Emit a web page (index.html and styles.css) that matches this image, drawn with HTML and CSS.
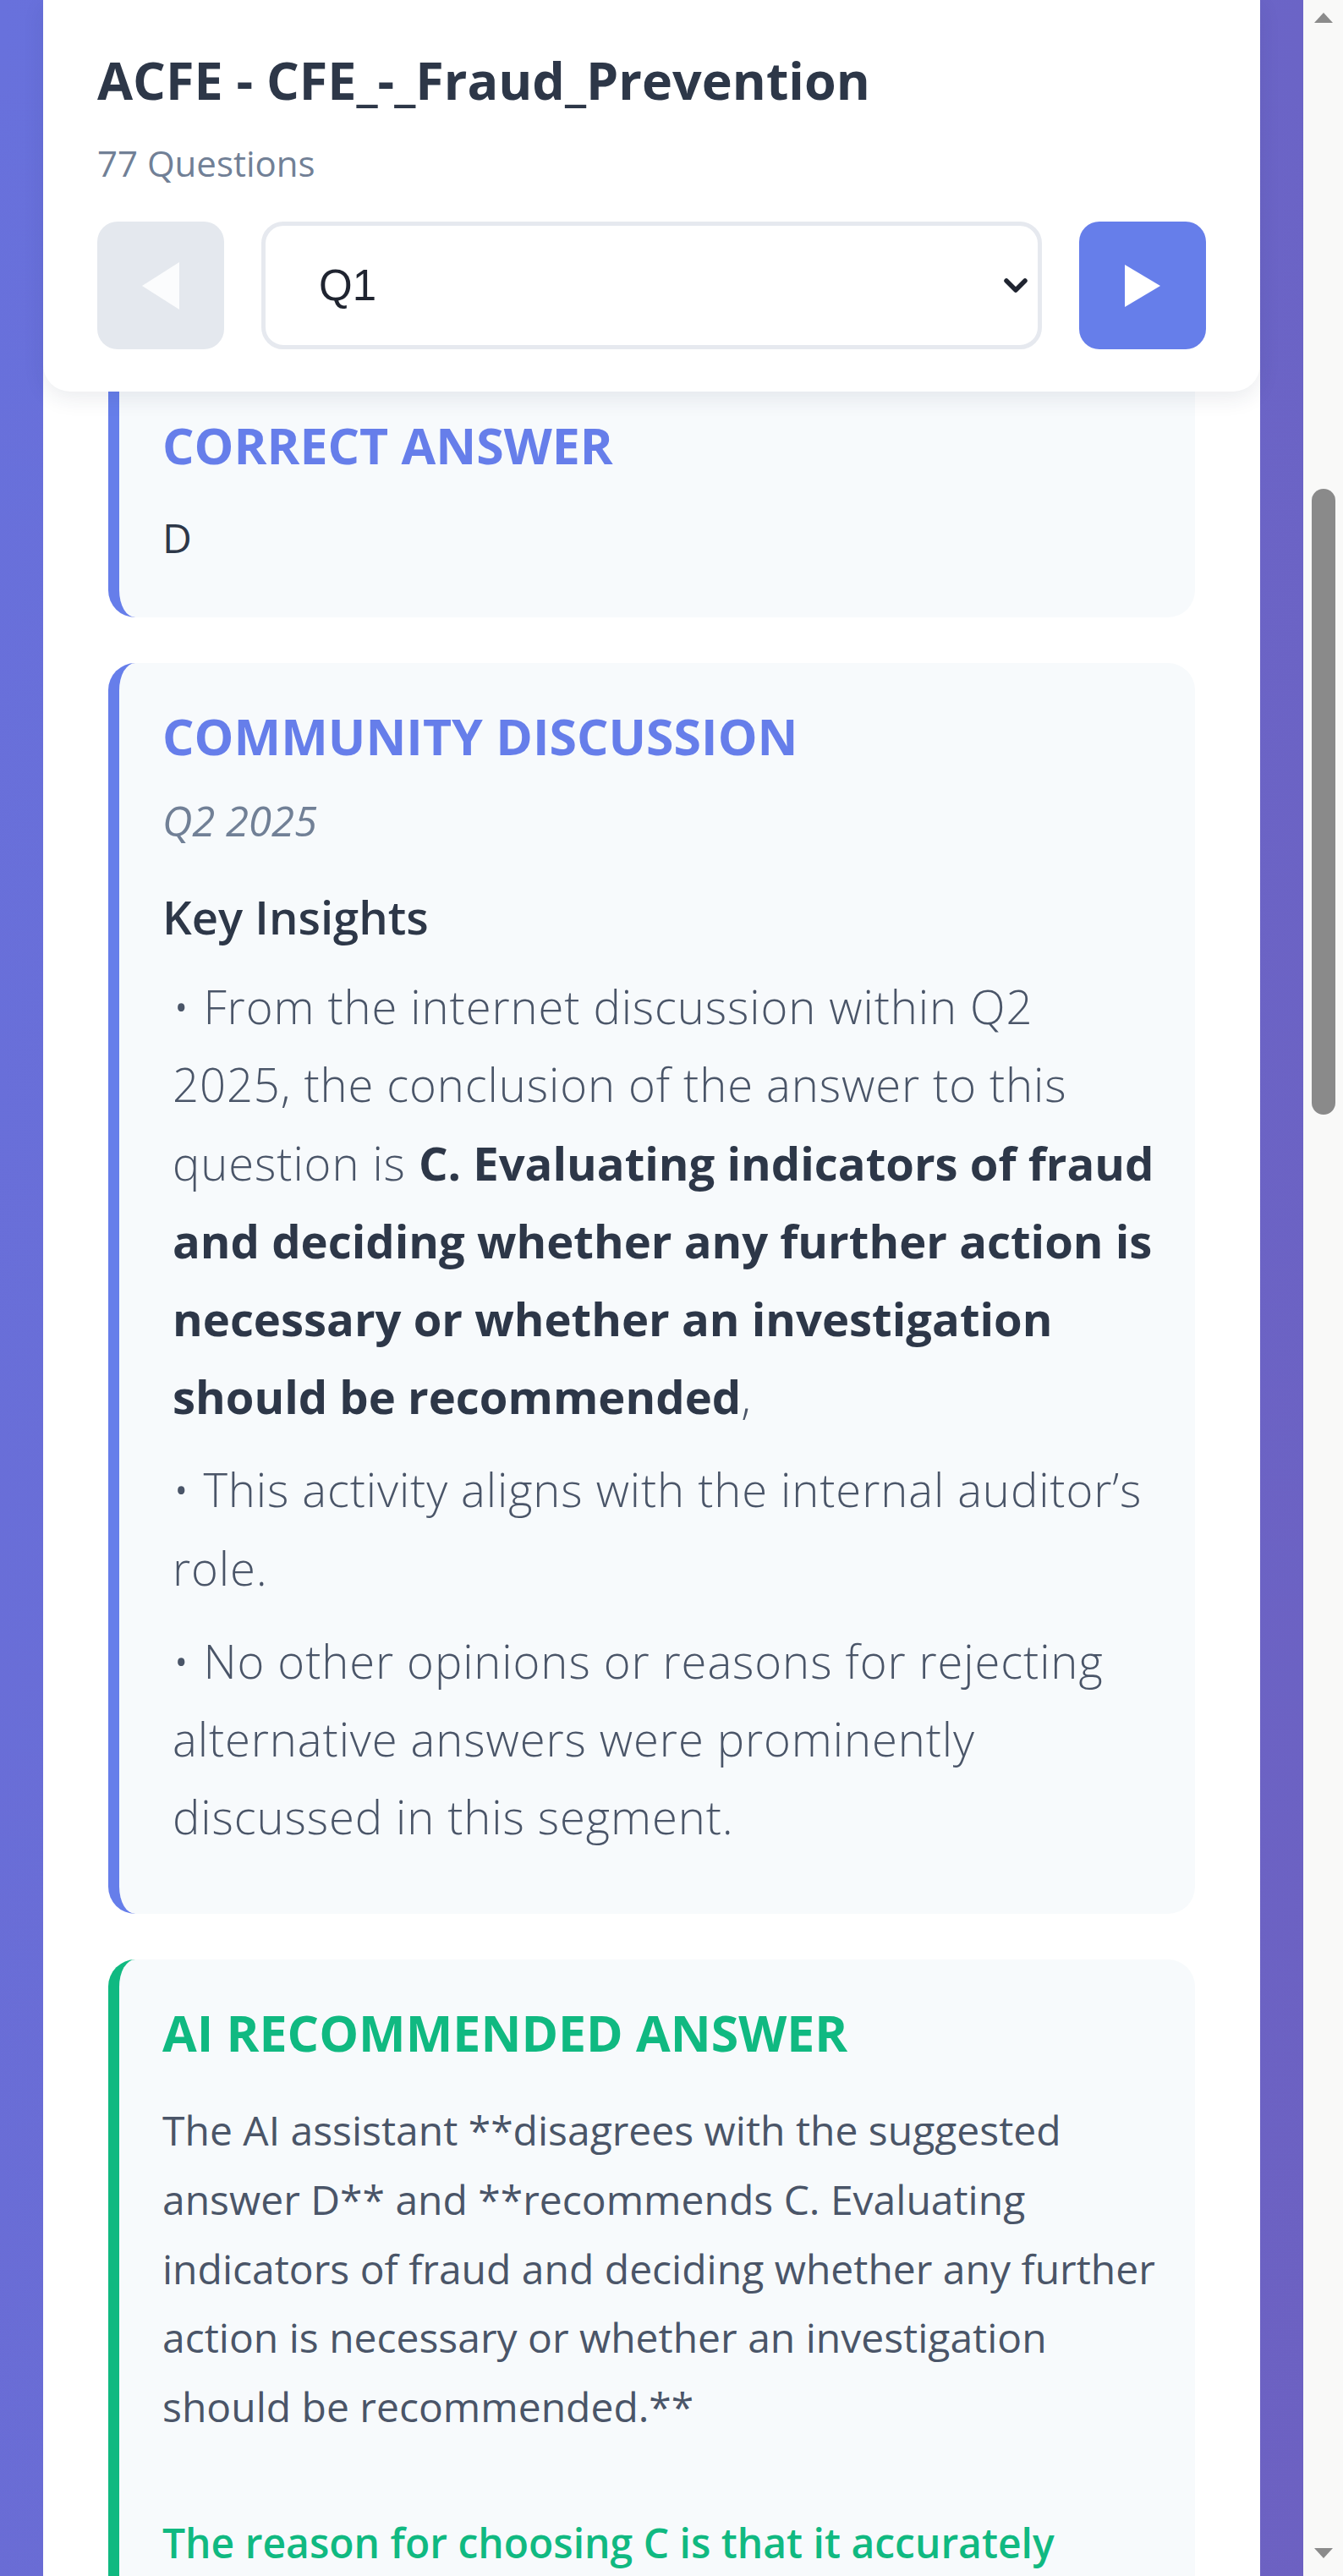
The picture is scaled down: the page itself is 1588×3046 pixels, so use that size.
FILE: index.html
```html
<!DOCTYPE html>
<html lang="en">
<head>
<meta charset="utf-8">
<title>ACFE - CFE_-_Fraud_Prevention</title>
<link rel="stylesheet" href="styles.css">
</head>
<body>
<div class="viewport">
  <div class="page">
    <main class="sheet">
      <header class="topbar">
        <h1 class="exam-title">ACFE - CFE_-_Fraud_Prevention</h1>
        <p class="count">77 Questions</p>
        <nav class="nav">
          <button class="nav-btn prev" type="button" aria-label="Previous">
            <svg width="48" height="60" viewBox="0 0 48 60"><path d="M46 2 L2 30 L46 58 Z" fill="#ffffff" fill-opacity="0.85"/></svg>
          </button>
          <div class="select">
            <span class="select-value">Q1</span>
            <svg class="chev" width="28" height="20" viewBox="0 0 28 20"><path d="M3 4 L14 15 L25 4" fill="none" stroke="#1f2430" stroke-width="5.5" stroke-linecap="round" stroke-linejoin="round"/></svg>
          </div>
          <button class="nav-btn next" type="button" aria-label="Next">
            <svg width="46" height="54" viewBox="0 0 46 54"><path d="M2 2 L44 27 L2 52 Z" fill="#ffffff"/></svg>
          </button>
        </nav>
      </header>

      <div class="content">
        <section class="panel panel-cut">
          <h2 class="panel-title">Correct Answer</h2>
          <p class="answer-letter">D</p>
        </section>

        <section class="panel">
          <h2 class="panel-title">Community Discussion</h2>
          <p class="period">Q2 2025</p>
          <h3 class="insights-title">Key Insights</h3>
          <ul class="insights">
            <li>• From the internet discussion within Q2<br>2025, the conclusion of the answer to this question is <strong>C. Evaluating indicators of fraud and deciding whether any further action is necessary or whether an investigation should be recommended</strong>,</li>
            <li>• This activity aligns with the internal auditor’s role.</li>
            <li>• No other opinions or reasons for rejecting alternative answers were prominently discussed in this segment.</li>
          </ul>
        </section>

        <section class="panel panel-ai">
          <h2 class="panel-title">AI Recommended Answer</h2>
          <p class="ai-text">The AI assistant **disagrees with the suggested answer D** and **recommends C. Evaluating indicators of fraud and deciding whether any further action is necessary or whether an investigation should be recommended.**</p>
          <p class="ai-reason">The reason for choosing C is that it accurately reflects the internal auditor’s responsibility when fraud indicators are identified.</p>
        </section>
      </div>
    </main>
  </div>
  <aside class="scrollbar" aria-hidden="true">
    <svg class="arrow-up" width="24" height="14" viewBox="0 0 24 14"><path d="M12 1 L23 13 L1 13 Z" fill="#8b8b8b"/></svg>
    <div class="thumb"></div>
    <svg class="arrow-down" width="24" height="14" viewBox="0 0 24 14"><path d="M1 1 L23 1 L12 13 Z" fill="#8b8b8b"/></svg>
  </aside>
</div>
</body>
</html>
```

FILE: styles.css
```css
html, body {
  margin: 0;
  padding: 0;
  height: 3046px;
  overflow: hidden;
}

body {
  font-family: "Open Sans", "Noto Sans", sans-serif;
  color: #4a5568;
}

.viewport {
  display: flex;
  height: 3046px;
}

.page {
  flex: 1;
  padding: 0 51px;
  background:
    linear-gradient(to bottom, rgba(118, 75, 162, 0) 0%, rgba(118, 75, 162, 0.12) 100%),
    linear-gradient(to right, #6871dc 0%, #6b64c6 100%);
  overflow: hidden;
}

.sheet {
  background: #ffffff;
  height: 100%;
}

/* ---------- header ---------- */
.topbar {
  position: relative;
  z-index: 1;
  background: #ffffff;
  border-radius: 0 0 32px 32px;
  box-shadow: 0 8px 26px rgba(30, 40, 80, 0.09);
  padding: 58px 64px 50px;
}

.exam-title {
  margin: 0;
  font-size: 61px;
  font-weight: 700;
  line-height: 1.22;
  color: #2d3748;
}

.count {
  margin: 34px 0 0;
  font-size: 42px;
  line-height: 1.3;
  color: #718096;
}

.nav {
  display: flex;
  gap: 44px;
  height: 151px;
  margin-top: 41px;
}

.nav-btn {
  flex: 0 0 150px;
  height: 151px;
  border: none;
  border-radius: 24px;
  display: flex;
  align-items: center;
  justify-content: center;
  padding: 0;
}

.nav-btn.prev {
  background: #e4e8ee;
}

.nav-btn.next {
  background: #667eea;
}

.select {
  flex: 1;
  box-sizing: border-box;
  height: 151px;
  border: 5px solid #e6e9ef;
  border-radius: 26px;
  background: #ffffff;
  display: flex;
  align-items: center;
  justify-content: space-between;
  padding: 0 12px 0 63px;
}

.select-value {
  font-family: "Liberation Sans", Arial, sans-serif;
  font-size: 51px;
  color: #1f2430;
}

/* ---------- content ---------- */
.content {
  padding: 0 77px;
}

.panel {
  background: #f7fafc;
  border-left: 13px solid #667eea;
  border-radius: 32px;
  padding: 52px 40px 51px 51px;
  margin-bottom: 54px;
}

.panel-cut {
  border-top-left-radius: 0;
  border-top-right-radius: 0;
  padding-top: 29px;
}

.panel-title {
  margin: 0 0 32px;
  font-size: 59px;
  font-weight: 700;
  line-height: 69px;
  text-transform: uppercase;
  color: #667eea;
}

.answer-letter {
  margin: 0;
  font-size: 48px;
  line-height: 1.8;
  color: #2d3748;
}

.period {
  margin: 0;
  font-size: 49px;
  font-style: italic;
  line-height: 1.35;
  color: #718096;
}

.insights-title {
  margin: 45px 0 0;
  font-size: 54.4px;
  font-weight: 600;
  line-height: 1.3;
  color: #2d3748;
}

.insights {
  list-style: none;
  margin: 25px -10px 0 0;
  padding: 0 0 0 12px;
}

.insights li {
  font-size: 54.4px;
  font-weight: 300;
  letter-spacing: 0.9px;
  line-height: 1.695;
  color: #4a5568;
  margin-bottom: 18px;
}

.insights strong {
  font-weight: 700;
  letter-spacing: 0;
  color: #2d3748;
}

.panel-ai {
  border-left-color: #10b981;
}

.panel-ai .panel-title {
  color: #10b981;
  margin-bottom: 40px;
}

.ai-text {
  margin: 0;
  font-size: 48px;
  line-height: 1.7;
  color: #4a5568;
}

.ai-reason {
  margin: 80px 0 0;
  font-size: 48px;
  font-weight: 600;
  line-height: 1.7;
  color: #10b981;
}

/* ---------- scrollbar ---------- */
.scrollbar {
  flex: 0 0 47px;
  background: #f9f9f8;
  display: flex;
  flex-direction: column;
  align-items: center;
}

.arrow-up {
  margin-top: 14px;
}

.thumb {
  width: 28px;
  height: 740px;
  margin-top: 550px;
  border-radius: 14px;
  background: #8a8a8a;
}

.arrow-down {
  margin-top: auto;
  margin-bottom: 20px;
}
```
